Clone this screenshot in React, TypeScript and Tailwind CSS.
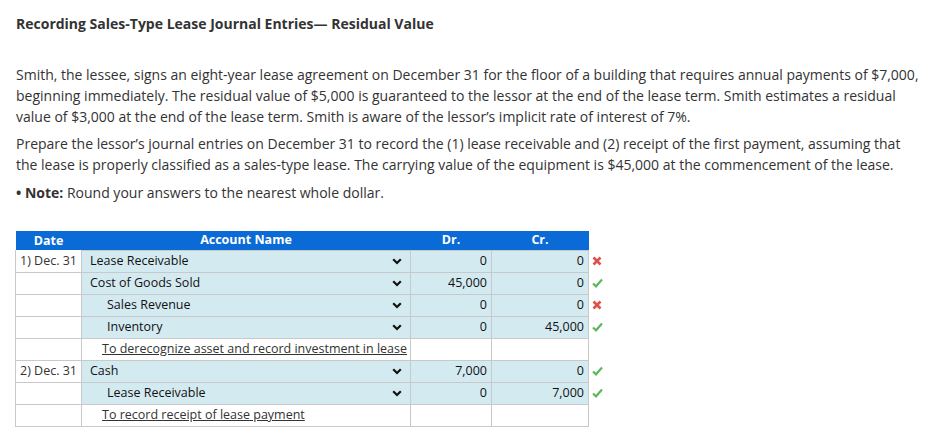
import React from 'react';

type Row = {
    date?: string;
    account?: string;
    indent?: boolean;
    memo?: string;
    dr?: string;
    cr?: string;
    mark?: 'ok' | 'bad';
};

const rows: Row[] = [
    { date: '1) Dec. 31', account: 'Lease Receivable', dr: '0', cr: '0', mark: 'bad' },
    { account: 'Cost of Goods Sold', dr: '45,000', cr: '0', mark: 'ok' },
    { account: 'Sales Revenue', indent: true, dr: '0', cr: '0', mark: 'bad' },
    { account: 'Inventory', indent: true, dr: '0', cr: '45,000', mark: 'ok' },
    { memo: 'To derecognize asset and record investment in lease' },
    { date: '2) Dec. 31', account: 'Cash', dr: '7,000', cr: '0', mark: 'ok' },
    { account: 'Lease Receivable', indent: true, dr: '0', cr: '7,000', mark: 'ok' },
    { memo: 'To record receipt of lease payment' }
];

const Chevron = () => (
    <svg width="10" height="7" viewBox="0 0 10 7" className="shrink-0">
        <path d="M1.2 1.2 L5 5 L8.8 1.2" fill="none" stroke="#111" strokeWidth="2.2" />
    </svg>
);

const Check = () => (
    <svg width="11" height="10" viewBox="0 0 11 10">
        <path d="M1 5.5 L4 8.3 L10 1.5" fill="none" stroke="#5cb85c" strokeWidth="2.2" />
    </svg>
);

const Cross = () => (
    <svg width="10" height="10" viewBox="0 0 10 10">
        <path d="M1.5 1.5 L8.5 8.5 M8.5 1.5 L1.5 8.5" fill="none" stroke="#e0504a" strokeWidth="2.6" />
    </svg>
);

export default function App() {
    return (
        <div className="w-[932px] h-[438px] bg-white text-[#333] overflow-hidden" style={{ fontFamily: '"Open Sans", sans-serif' }}>
            <div className="pl-4 pr-[12px]">
                <h2 className="pt-[15px] text-[14px] font-bold leading-[18px] text-[#333]">
                    Recording Sales-Type Lease Journal Entries— Residual Value
                </h2>
                <p className="mt-[31px] text-[14px] leading-[21px]">
                    Smith, the lessee, signs an eight-year lease agreement on December 31 for the floor of a building that requires annual payments of $7,000, beginning immediately. The residual value of $5,000 is guaranteed to the lessor at the end of the lease term. Smith estimates a residual value of $3,000 at the end of the lease term. Smith is aware of the lessor’s implicit rate of interest of 7%.
                </p>
                <p className="mt-[6px] text-[14px] leading-[21px] pr-[10px]">
                    Prepare the lessor’s journal entries on December 31 to record the (1) lease receivable and (2) receipt of the first payment, assuming that the lease is properly classified as a sales-type lease. The carrying value of the equipment is $45,000 at the commencement of the lease.
                </p>
                <p className="mt-[7px] text-[14px] leading-[21px]">
                    <span className="font-bold">• Note:</span> Round your answers to the nearest whole dollar.
                </p>
            </div>

            <table className="ml-[15px] mt-[28px] border-collapse text-[12.5px] leading-[16px]">
                <thead>
                    <tr className="h-[19px] bg-[#0a6ad6] text-white font-bold">
                        <th className="w-[66px] text-center font-bold p-0">Date</th>
                        <th className="w-[329px] text-center font-bold p-0">Account Name</th>
                        <th className="w-[81px] text-center font-bold p-0">Dr.</th>
                        <th className="w-[97px] text-center font-bold p-0">Cr.</th>
                        <th className="w-[20px] bg-white p-0"></th>
                    </tr>
                </thead>
                <tbody>
                    {rows.map((r, i) => (
                        <tr key={i} className="h-[22px]">
                            <td className="border border-[#c9c9c9] border-t-0 text-right pr-[4px] p-0 text-[#333] whitespace-nowrap">
                                {r.date ?? ''}
                            </td>
                            {r.memo ? (
                                <td className="border border-[#c9c9c9] p-0 pl-[20px] bg-white">
                                    <span className="underline text-[#333] whitespace-nowrap">{r.memo}</span>
                                </td>
                            ) : (
                                <td className="border border-[#c9c9c9] p-0 bg-[#d4eaf1]">
                                    <div className={`flex items-center justify-between pr-[8px] ${r.indent ? 'pl-[25px]' : 'pl-[8px]'}`}>
                                        <span className="text-[#111]">{r.account}</span>
                                        <Chevron />
                                    </div>
                                </td>
                            )}
                            <td className={`border border-[#c9c9c9] p-0 pr-[4px] text-right text-[#111] ${r.memo ? 'bg-white' : 'bg-[#d4eaf1]'}`}>
                                {r.dr ?? ''}
                            </td>
                            <td className={`border border-[#c9c9c9] p-0 pr-[4px] text-right text-[#111] ${r.memo ? 'bg-white' : 'bg-[#d4eaf1]'}`}>
                                {r.cr ?? ''}
                            </td>
                            <td className="p-0 pl-[3px]">
                                {r.mark === 'ok' && <Check />}
                                {r.mark === 'bad' && <Cross />}
                            </td>
                        </tr>
                    ))}
                </tbody>
            </table>
        </div>
    );
}
